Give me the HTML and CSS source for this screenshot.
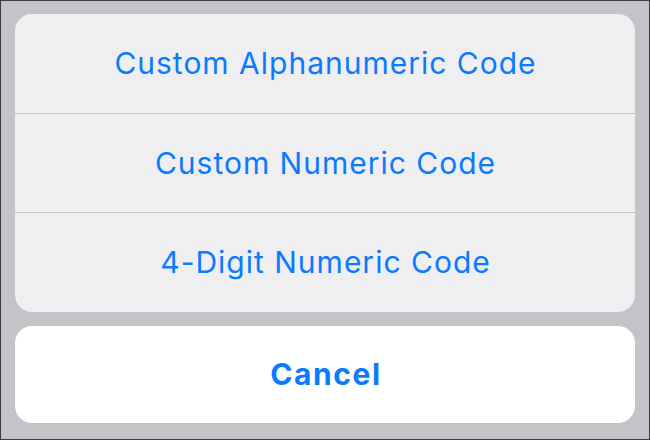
FILE: index.html
```html
<!DOCTYPE html>
<html>
<head>
<meta charset="utf-8">
<link rel="stylesheet" href="styles.css">
</head>
<body>
<div class="sheet">
  <div class="group">
    <div class="action">Custom Alphanumeric Code</div>
    <div class="action">Custom Numeric Code</div>
    <div class="action">4-Digit Numeric Code</div>
  </div>
  <div class="cancel">Cancel</div>
</div>
</body>
</html>
```
FILE: styles.css
```css
html, body {
  margin: 0;
  padding: 0;
}
body {
  width: 650px;
  height: 440px;
  overflow: hidden;
  font-family: Inter, "Noto Sans", sans-serif;
}
.sheet {
  box-sizing: border-box;
  width: 650px;
  height: 440px;
  background: #c4c3c8;
  border: 1px solid #3c3c3e;
  padding: 13px 14px 16px 14px;
  display: flex;
  flex-direction: column;
  gap: 14px;
}
.group {
  background: #efeff2;
  border-radius: 17px;
  display: flex;
  flex-direction: column;
  overflow: hidden;
}
.action {
  height: 99px;
  display: flex;
  align-items: center;
  justify-content: center;
  color: #0a7aff;
  font-size: 30px;
  letter-spacing: 1px;
  padding-left: 1px;
}
.action + .action {
  border-top: 1px solid #c3c3c6;
}
.cancel {
  height: 98px;
  background: #ffffff;
  border-radius: 17px;
  display: flex;
  align-items: center;
  justify-content: center;
  color: #0a7aff;
  font-size: 30px;
  font-weight: 700;
  letter-spacing: 1.6px;
  padding-left: 2px;
}
```
